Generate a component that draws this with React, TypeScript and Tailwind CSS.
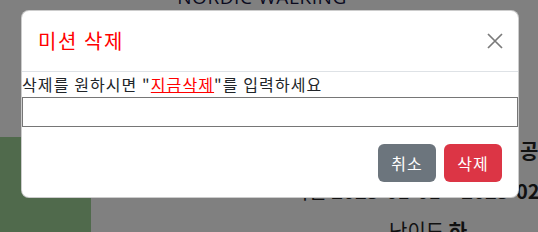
import React from "react";

const kr = { fontFamily: '"Noto Sans CJK KR", "Noto Sans", sans-serif' };

export default function App() {
  return (
    <div className="relative h-[232px] w-[538px] overflow-hidden bg-[#808080]" style={kr}>
      {/* page behind the backdrop */}
      <div className="flex flex-col">
        <div
          className="-mt-[17px] pr-[14px] text-center text-[19px] leading-[28px] tracking-[0.6px] text-[#0a0a1e]"
          style={{ fontFamily: '"Open Sans", sans-serif' }}
        >
          NORDIC WALKING
        </div>
        <div className="mt-[126px] flex">
          <div className="h-[100px] w-[91px] shrink-0 bg-[#506a4c]" />
          <div className="-mt-[6px] flex flex-1 flex-col text-[20px] leading-[40px] text-[#111]">
            <div className="pl-[429px] font-bold">공개</div>
            <div className="whitespace-nowrap pl-[199px]">
              기간 <span className="font-bold">2023-01-01 ~ 2023-02-28</span>
            </div>
            <div className="whitespace-nowrap pl-[298px]">
              난이도 <span className="font-bold">하</span>
            </div>
          </div>
        </div>
      </div>

      {/* modal */}
      <div className="absolute left-[21px] top-[10px] w-[498px] rounded-lg border border-black/20 bg-white">
        <div className="flex items-center justify-between border-b border-[#dee2e6] px-4 py-4">
          <div className="text-[20px] leading-[28px] tracking-[1.6px] text-[#ff0000]">미션 삭제</div>
          <svg width="16" height="16" viewBox="0 0 16 16" className="mr-[-1px]">
            <path d="M1 1 L15 15 M15 1 L1 15" stroke="#7a7a7a" strokeWidth="1.7" fill="none" />
          </svg>
        </div>
        <div className="whitespace-nowrap text-[16px] leading-[24px] tracking-[1.1px] text-[#212529]">
          삭제를 원하시면 "<span className="text-[#ff0000] underline">지금삭제</span>"를 입력하세요
        </div>
        <input className="mt-px block h-[30px] w-full border border-[#767676] bg-white px-1 outline-none" />
        <div className="flex justify-end gap-2 px-4 pb-[15px] pt-[17px]">
          <button className="h-[38px] w-[58px] rounded-[6px] bg-[#6c757d] text-[16px] tracking-[1px] text-white">취소</button>
          <button className="h-[38px] w-[58px] rounded-[6px] bg-[#dc3545] text-[16px] tracking-[1px] text-white">삭제</button>
        </div>
      </div>
    </div>
  );
}
